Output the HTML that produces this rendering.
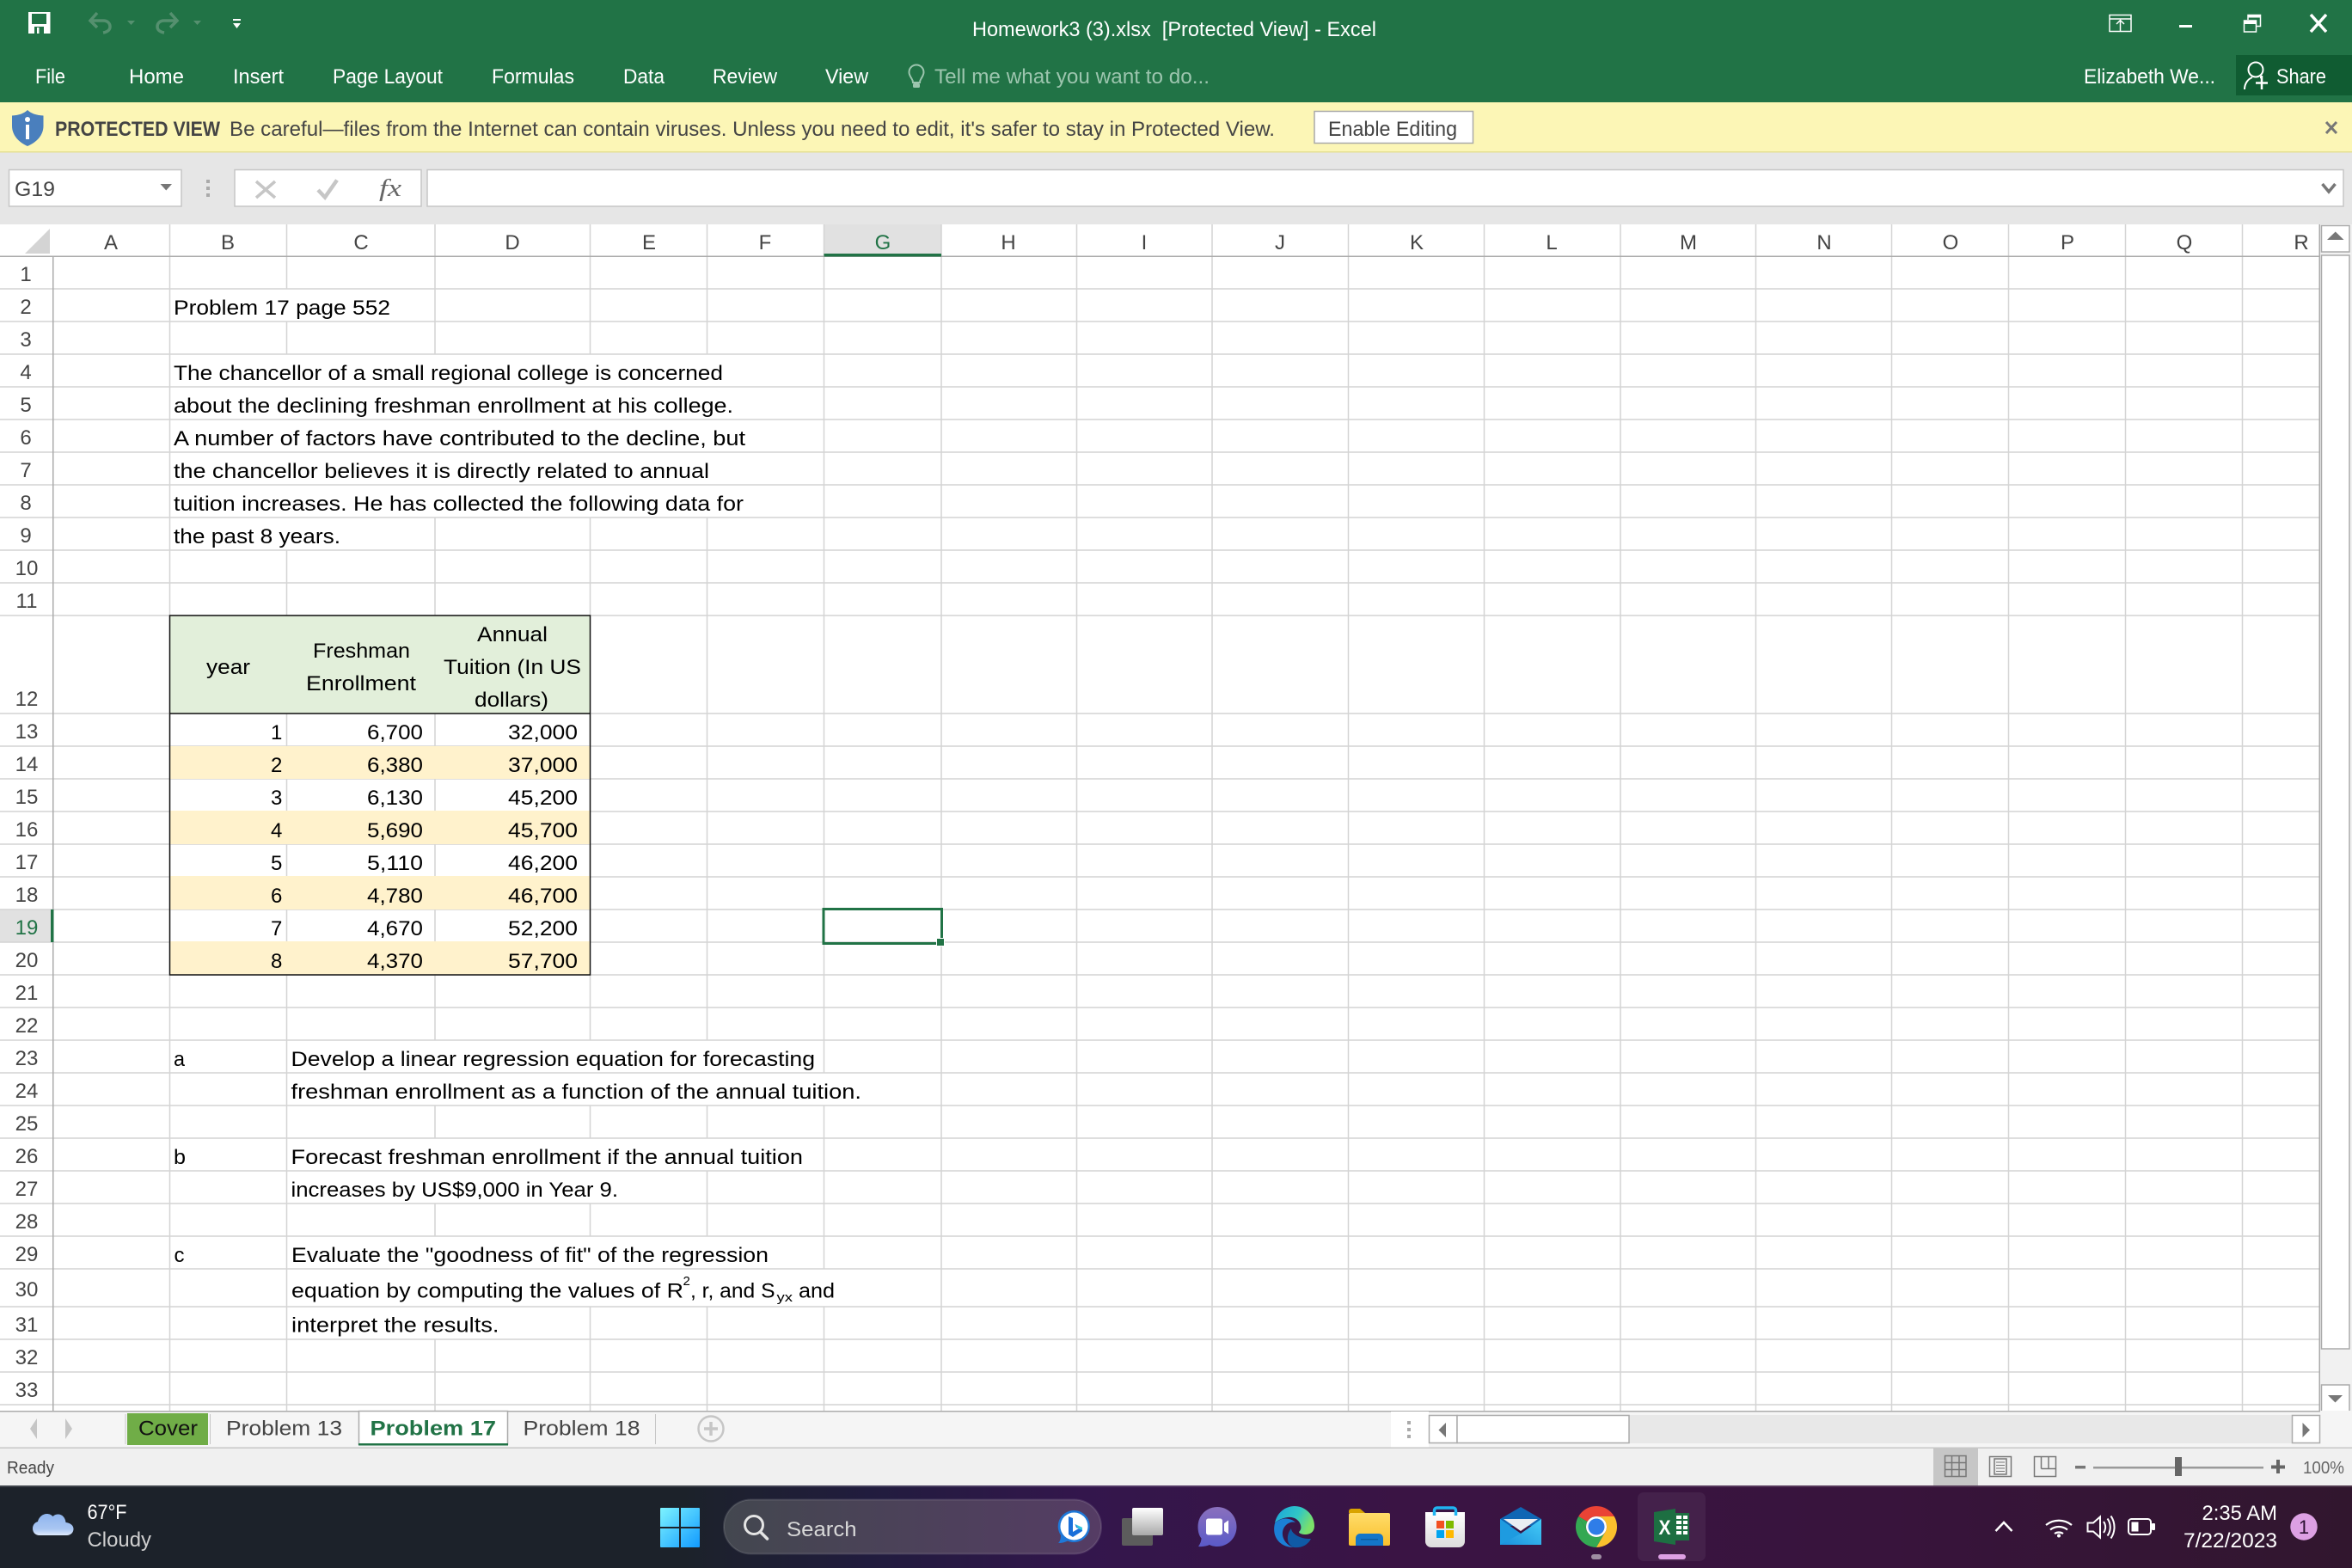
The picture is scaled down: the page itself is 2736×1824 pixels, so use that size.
<!DOCTYPE html>
<html lang="en">
<head>
<meta charset="utf-8">
<title>Homework3 (3).xlsx [Protected View] - Excel</title>
<style>
html,body{margin:0;padding:0;background:#fff;width:2736px;height:1824px;overflow:hidden}
svg{display:block;position:absolute;left:0;top:0}
text{font-family:"Liberation Sans",sans-serif;font-size:24px;fill:#000;white-space:pre}
.w text{fill:#fff}
.h text{fill:#444;text-anchor:middle}
.r text{fill:#444;text-anchor:middle}
.y text{fill:#444}
</style>
</head>
<body>
<svg xmlns="http://www.w3.org/2000/svg" width="2736" height="1824" viewBox="0 0 2736 1824">
<defs>
<linearGradient id="tb" x1="0" x2="1" y1="0" y2="0">
<stop offset="0" stop-color="#1c222a"/><stop offset=".29" stop-color="#1c222a"/><stop offset=".37" stop-color="#211c3e"/><stop offset=".46" stop-color="#33164c"/><stop offset=".6" stop-color="#3a1444"/><stop offset=".8" stop-color="#38143c"/><stop offset="1" stop-color="#31162e"/>
</linearGradient>
<linearGradient id="sr" x1="0" x2="1" y1="0" y2="0"><stop offset="0" stop-color="#43474f"/><stop offset="1" stop-color="#553c64"/></linearGradient>
<linearGradient id="win" x1="0" x2="1" y1="0" y2="1"><stop offset="0" stop-color="#7df3ff"/><stop offset="1" stop-color="#119aff"/></linearGradient>
<linearGradient id="cl" x1="0" x2="0" y1="0" y2="1"><stop offset="0" stop-color="#8fb5ee"/><stop offset=".7" stop-color="#a9c6f2"/><stop offset="1" stop-color="#dfeafc"/></linearGradient>
<linearGradient id="tm" x1="0" x2="0" y1="0" y2="1"><stop offset="0" stop-color="#8a70bd"/><stop offset="1" stop-color="#5a5ac8"/></linearGradient>
<linearGradient id="eg" x1="0" x2="1" y1="0" y2=".4"><stop offset="0" stop-color="#1aa3dc"/><stop offset=".6" stop-color="#30c6c6"/><stop offset="1" stop-color="#7be06a"/></linearGradient>
<linearGradient id="fd" x1="0" x2="0" y1="0" y2="1"><stop offset="0" stop-color="#ffdc6a"/><stop offset="1" stop-color="#f9c02c"/></linearGradient>
<linearGradient id="st" x1="0" x2="0" y1="0" y2="1"><stop offset="0" stop-color="#fff"/><stop offset="1" stop-color="#dcdcdc"/></linearGradient>
<linearGradient id="ml" x1="0" x2="1" y1="1" y2="0"><stop offset="0" stop-color="#1a8fdc"/><stop offset="1" stop-color="#45ccf7"/></linearGradient>
<linearGradient id="tv" x1="0" x2="0" y1="0" y2="1"><stop offset="0" stop-color="#fff"/><stop offset="1" stop-color="#a9a9a9"/></linearGradient>
</defs>

<!-- title + ribbon -->
<rect width="2736" height="119" fill="#217346"/>
<rect x="2601" y="64" width="135" height="47" fill="#105c32"/>

<!-- QAT icons -->
<path d="M33 14h25.500v25H33z" fill="#fff"/>
<rect x="37" y="16" width="17" height="12" fill="#217346"/>
<rect x="40" y="31" width="11" height="8" fill="#217346"/>
<rect x="43" y="32" width="2.500" height="7" fill="#fff"/>
<g fill="none" stroke="#55906f" stroke-width="3.500">
<path d="M106 24h14c6 0 8 4 8 7s-2 6-8 7"/>
<path d="M113 15l-8 9 8 8"/>
<path d="M205 24h-14c-6 0-8 4-8 7s2 6 8 7"/>
<path d="M198 15l8 9-8 8"/>
</g>
<path d="M148 24h9l-4.500 5zM225 24h9l-4.500 5z" fill="#55906f"/>
<rect x="271" y="22" width="9" height="2" fill="#fff"/>
<path d="M271 27h9l-4.500 6z" fill="#fff"/>

<g class="w">
<text x="1131" y="42" textLength="470" lengthAdjust="spacingAndGlyphs">Homework3 (3).xlsx  [Protected View] - Excel</text>
<text x="41" y="97" textLength="35" lengthAdjust="spacingAndGlyphs">File</text>
<text x="150" y="97" textLength="64" lengthAdjust="spacingAndGlyphs">Home</text>
<text x="271" y="97" textLength="59" lengthAdjust="spacingAndGlyphs">Insert</text>
<text x="387" y="97" textLength="128" lengthAdjust="spacingAndGlyphs">Page Layout</text>
<text x="572" y="97" textLength="96" lengthAdjust="spacingAndGlyphs">Formulas</text>
<text x="725" y="97" textLength="48" lengthAdjust="spacingAndGlyphs">Data</text>
<text x="829" y="97" textLength="75" lengthAdjust="spacingAndGlyphs">Review</text>
<text x="960" y="97" textLength="50" lengthAdjust="spacingAndGlyphs">View</text>
<text x="2424" y="97" textLength="153" lengthAdjust="spacingAndGlyphs">Elizabeth We...</text>
<text x="2648" y="97" textLength="58" lengthAdjust="spacingAndGlyphs">Share</text>
</g>
<text x="1087" y="97" textLength="320" lengthAdjust="spacingAndGlyphs" style="fill:#9cc5ae">Tell me what you want to do...</text>
<!-- bulb -->
<path d="M1066 75.500c-5 0-8.500 4-8.500 8.500 0 3 1.500 5 3 7.500 1 1.500 1.500 3 1.500 4.500h8c0-1.500.5-3 1.500-4.500 1.500-2.500 3-4.500 3-7.500 0-4.500-3.500-8.500-8.500-8.500z" fill="none" stroke="#9cc5ae" stroke-width="2"/>
<rect x="1062" y="97" width="8" height="5" rx="1.500" fill="#9cc5ae"/>

<!-- window buttons -->
<g fill="none" stroke="#fff" stroke-width="1.500">
<rect x="2454" y="17.500" width="25" height="19"/>
<path d="M2454 22h25M2466.500 36v-12M2462 28l4.500-4.500 4.500 4.500"/>
<rect x="2610.500" y="24" width="14" height="13"/>
<path d="M2615 23v-5.500h14.500v13h-4.500"/>
</g>
<rect x="2610" y="24" width="15" height="4" fill="#fff"/>
<rect x="2615" y="17" width="15" height="3.500" fill="#fff"/>
<rect x="2535" y="29" width="15" height="3" fill="#fff"/>
<path d="M2688 17l18 20M2706 17l-18 20" stroke="#fff" stroke-width="3.500" fill="none"/>
<!-- person -->
<circle cx="2624" cy="81" r="8.500" fill="none" stroke="#fff" stroke-width="2"/>
<path d="M2611 104c0-7 4-12 9-14" fill="none" stroke="#fff" stroke-width="2"/>
<path d="M2629 90h3M2631 88v16M2624 96.500h14" fill="none" stroke="#fff" stroke-width="2.500"/>

<!-- protected bar -->
<rect y="119" width="2736" height="58" fill="#fcf6b6"/>
<rect y="176" width="2736" height="1.500" fill="#e5e092"/>
<path d="M32 128c4 4 10 6 18.500 6.500v12c0 11-8 19-18.500 23.500C22 165.500 14 157.500 14 146.500v-12c8-.5 14-2.500 18-6.500z" fill="#4a7fbd"/>
<circle cx="32" cy="139" r="3" fill="#fff"/><rect x="30" y="145" width="4" height="17" fill="#fff"/>
<g class="y">
<text x="64" y="158" textLength="192" lengthAdjust="spacingAndGlyphs" style="font-weight:bold">PROTECTED VIEW</text>
<text x="267" y="158" textLength="1216" lengthAdjust="spacingAndGlyphs">Be careful—files from the Internet can contain viruses. Unless you need to edit, it's safer to stay in Protected View.</text>
</g>
<rect x="1529" y="129.500" width="184.500" height="37" fill="#fff" stroke="#a9a9a9" stroke-width="1.500"/>
<text x="1545" y="158" textLength="150" lengthAdjust="spacingAndGlyphs" style="fill:#444">Enable Editing</text>
<path d="M2706 142l12 13M2718 142l-12 13" stroke="#777" stroke-width="3" fill="none"/>

<!-- formula bar -->
<rect y="177.500" width="2736" height="84" fill="#e6e6e6"/>
<rect x="10.500" y="197.500" width="200.500" height="42.500" fill="#fff" stroke="#c6c6c6" stroke-width="1.500"/>
<text x="17" y="228" textLength="47" lengthAdjust="spacingAndGlyphs" style="fill:#444">G19</text>
<path d="M186.500 214h13.500l-6.750 7.500z" fill="#777"/>
<rect x="240" y="209" width="4" height="4" fill="#aaa"/><rect x="240" y="217" width="4" height="4" fill="#aaa"/><rect x="240" y="225" width="4" height="4" fill="#aaa"/>
<rect x="273" y="197.500" width="217" height="42.500" fill="#fff" stroke="#c6c6c6" stroke-width="1.500"/>
<path d="M298 211l22 19M320 211l-22 19" stroke="#c6c6c6" stroke-width="3.500" fill="none"/>
<path d="M370 221l8 8.500 14-20" stroke="#c6c6c6" stroke-width="4.500" fill="none"/>
<text x="441" y="228" textLength="26" lengthAdjust="spacingAndGlyphs" style="font-family:'Liberation Serif',serif;font-style:italic;font-size:28px;fill:#666">fx</text>
<rect x="497" y="197.500" width="2229" height="42.500" fill="#fff" stroke="#c6c6c6" stroke-width="1.500"/>
<path d="M2701.500 214l7.500 9 7.500-9" stroke="#777" stroke-width="3.500" fill="none"/>

<!-- grid area -->
<rect y="261" width="2699" height="1380" fill="#fff"/>
<rect x="958.500" y="261" width="136.500" height="37" fill="#e1e1e1"/>
<rect y="1058" width="61" height="38" fill="#e1e1e1"/>
<path d="M29 295h29v-29z" fill="#d4d4d4"/>

<!-- vertical grid lines -->
<path d="M197.500 261V1641M333.500 261V1641M506 261V1641M686.500 261V1641M822.500 261V1641M958.500 261V1641M1095 261V1641M1252.500 261V1641M1410 261V1641M1568.500 261V1641M1726.500 261V1641M1885 261V1641M2042.500 261V1641M2200.500 261V1641M2336.500 261V1641M2472.500 261V1641M2608.500 261V1641" stroke="#d4d4d4" stroke-width="1.500" fill="none"/>
<!-- overflow masks -->
<g fill="#fff">
<rect x="331.500" y="336" width="4" height="38"/>
<rect x="331.500" y="412" width="4" height="228"/>
<rect x="504" y="412" width="4" height="190"/>
<rect x="684.500" y="412" width="4" height="190"/>
<rect x="820.500" y="412" width="4" height="190"/>
<rect x="504" y="1210" width="4" height="76"/>
<rect x="684.500" y="1210" width="4" height="76"/>
<rect x="820.500" y="1210" width="4" height="76"/>
<rect x="956.500" y="1248" width="4" height="38"/>
<rect x="504" y="1324" width="4" height="76"/>
<rect x="684.500" y="1324" width="4" height="76"/>
<rect x="820.500" y="1324" width="4" height="38"/>
<rect x="504" y="1438" width="4" height="120"/>
<rect x="684.500" y="1438" width="4" height="82"/>
<rect x="820.500" y="1438" width="4" height="82"/>
<rect x="956.500" y="1476" width="4" height="44"/>
</g>
<!-- horizontal grid lines -->
<path d="M0 336H2698M0 374H2698M0 412H2698M0 450H2698M0 488H2698M0 526H2698M0 564H2698M0 602H2698M0 640H2698M0 678H2698M0 716H2698M0 830H2698M0 868H2698M0 906H2698M0 944H2698M0 982H2698M0 1020H2698M0 1058H2698M0 1096H2698M0 1134H2698M0 1172H2698M0 1210H2698M0 1248H2698M0 1286H2698M0 1324H2698M0 1362H2698M0 1400H2698M0 1438H2698M0 1476H2698M0 1520H2698M0 1558H2698M0 1596H2698M0 1634H2698" stroke="#d4d4d4" stroke-width="1.500" fill="none"/>
<rect x="61" y="298" width="1.500" height="1343" fill="#ababab"/>
<rect y="297.500" width="2699" height="1.500" fill="#ababab"/>
<rect x="958.500" y="295" width="136.500" height="3.500" fill="#217346"/>
<rect x="59" y="1058" width="3.500" height="38" fill="#217346"/>

<!-- column headers -->
<g class="h">
<text x="129" y="290">A</text><text x="265" y="290">B</text><text x="420" y="290">C</text><text x="596" y="290">D</text><text x="755" y="290">E</text><text x="890" y="290">F</text>
<text x="1027" y="290" style="fill:#217346">G</text>
<text x="1173" y="290">H</text><text x="1331" y="290">I</text><text x="1489" y="290">J</text><text x="1648" y="290">K</text><text x="1805" y="290">L</text><text x="1964" y="290">M</text><text x="2122" y="290">N</text><text x="2269" y="290">O</text><text x="2405" y="290">P</text><text x="2541" y="290">Q</text><text x="2677" y="290">R</text>
</g>
<!-- row headers -->
<g class="r" transform="translate(0,-1)">
<text x="30" y="328">1</text><text x="30" y="366">2</text><text x="30" y="404">3</text><text x="30" y="442">4</text><text x="30" y="480">5</text><text x="30" y="518">6</text><text x="30" y="556">7</text><text x="30" y="594">8</text><text x="30" y="632">9</text><text x="31" y="670">10</text><text x="31" y="708">11</text><text x="31" y="822">12</text><text x="31" y="860">13</text><text x="31" y="898">14</text><text x="31" y="936">15</text><text x="31" y="974">16</text><text x="31" y="1012">17</text><text x="31" y="1050">18</text>
<text x="31" y="1088" style="fill:#217346">19</text>
<text x="31" y="1126">20</text><text x="31" y="1164">21</text><text x="31" y="1202">22</text><text x="31" y="1240">23</text><text x="31" y="1278">24</text><text x="31" y="1316">25</text><text x="31" y="1354">26</text><text x="31" y="1392">27</text><text x="31" y="1430">28</text><text x="31" y="1468">29</text><text x="31" y="1509">30</text><text x="31" y="1550">31</text><text x="31" y="1588">32</text><text x="31" y="1626">33</text>
</g>

<!-- sheet text -->
<text x="202" y="366" textLength="252" lengthAdjust="spacingAndGlyphs">Problem 17 page 552</text>
<text x="202" y="442" textLength="639" lengthAdjust="spacingAndGlyphs">The chancellor of a small regional college is concerned</text>
<text x="202" y="480" textLength="651" lengthAdjust="spacingAndGlyphs">about the declining freshman enrollment at his college.</text>
<text x="202" y="518" textLength="665" lengthAdjust="spacingAndGlyphs">A number of factors have contributed to the decline, but</text>
<text x="202" y="556" textLength="623" lengthAdjust="spacingAndGlyphs">the chancellor believes it is directly related to annual</text>
<text x="202" y="594" textLength="663" lengthAdjust="spacingAndGlyphs">tuition increases. He has collected the following data for</text>
<text x="202" y="632" textLength="194" lengthAdjust="spacingAndGlyphs">the past 8 years.</text>

<!-- table -->
<rect x="197.500" y="716" width="489" height="114" fill="#e2efda"/>
<rect x="197.500" y="868" width="489" height="38" fill="#fff2cc"/>
<rect x="197.500" y="944" width="489" height="38" fill="#fff2cc"/>
<rect x="197.500" y="1020" width="489" height="38" fill="#fff2cc"/>
<rect x="197.500" y="1096" width="489" height="38" fill="#fff2cc"/>
<path d="M197.500 944H686.500M197.500 1020H686.500M197.500 1096H686.500" stroke="#fff2cc" stroke-width="2"/>
<rect x="197.500" y="716" width="489" height="418" fill="none" stroke="#111" stroke-width="1.500"/>
<path d="M197.500 830H686.500" stroke="#111" stroke-width="1.500"/>
<text x="240" y="784" textLength="51" lengthAdjust="spacingAndGlyphs">year</text>
<text x="364" y="765" textLength="113" lengthAdjust="spacingAndGlyphs">Freshman</text>
<text x="356" y="803" textLength="128" lengthAdjust="spacingAndGlyphs">Enrollment</text>
<text x="555" y="746" textLength="82" lengthAdjust="spacingAndGlyphs">Annual</text>
<text x="516" y="784" textLength="160" lengthAdjust="spacingAndGlyphs">Tuition (In US</text>
<text x="552" y="822" textLength="86" lengthAdjust="spacingAndGlyphs">dollars)</text>
<g>
<text x="315" y="860">1</text><text x="427" y="860" textLength="65" lengthAdjust="spacingAndGlyphs">6,700</text><text x="591" y="860" textLength="81" lengthAdjust="spacingAndGlyphs">32,000</text>
<text x="315" y="898">2</text><text x="427" y="898" textLength="65" lengthAdjust="spacingAndGlyphs">6,380</text><text x="591" y="898" textLength="81" lengthAdjust="spacingAndGlyphs">37,000</text>
<text x="315" y="936">3</text><text x="427" y="936" textLength="65" lengthAdjust="spacingAndGlyphs">6,130</text><text x="591" y="936" textLength="81" lengthAdjust="spacingAndGlyphs">45,200</text>
<text x="315" y="974">4</text><text x="427" y="974" textLength="65" lengthAdjust="spacingAndGlyphs">5,690</text><text x="591" y="974" textLength="81" lengthAdjust="spacingAndGlyphs">45,700</text>
<text x="315" y="1012">5</text><text x="427" y="1012" textLength="65" lengthAdjust="spacingAndGlyphs">5,110</text><text x="591" y="1012" textLength="81" lengthAdjust="spacingAndGlyphs">46,200</text>
<text x="315" y="1050">6</text><text x="427" y="1050" textLength="65" lengthAdjust="spacingAndGlyphs">4,780</text><text x="591" y="1050" textLength="81" lengthAdjust="spacingAndGlyphs">46,700</text>
<text x="315" y="1088">7</text><text x="427" y="1088" textLength="65" lengthAdjust="spacingAndGlyphs">4,670</text><text x="591" y="1088" textLength="81" lengthAdjust="spacingAndGlyphs">52,200</text>
<text x="315" y="1126">8</text><text x="427" y="1126" textLength="65" lengthAdjust="spacingAndGlyphs">4,370</text><text x="591" y="1126" textLength="81" lengthAdjust="spacingAndGlyphs">57,700</text>
</g>

<!-- selection -->
<rect x="958" y="1057.500" width="137.500" height="40" fill="none" stroke="#217346" stroke-width="3"/>
<rect x="1089" y="1091" width="10" height="10" fill="#fff"/>
<rect x="1090" y="1092" width="8" height="8" fill="#217346"/>

<!-- questions -->
<text x="202" y="1240" textLength="13" lengthAdjust="spacingAndGlyphs">a</text>
<text x="338.500" y="1240" textLength="609.500" lengthAdjust="spacingAndGlyphs">Develop a linear regression equation for forecasting</text>
<text x="338.500" y="1278" textLength="663.500" lengthAdjust="spacingAndGlyphs">freshman enrollment as a function of the annual tuition.</text>
<text x="202" y="1354" textLength="14" lengthAdjust="spacingAndGlyphs">b</text>
<text x="338.500" y="1354" textLength="595.500" lengthAdjust="spacingAndGlyphs">Forecast freshman enrollment if the annual tuition</text>
<text x="338.500" y="1392" textLength="380.500" lengthAdjust="spacingAndGlyphs">increases by US$9,000 in Year 9.</text>
<text x="202.500" y="1468" textLength="12" lengthAdjust="spacingAndGlyphs">c</text>
<text x="339" y="1468" textLength="555" lengthAdjust="spacingAndGlyphs">Evaluate the "goodness of fit" of the regression</text>
<text x="339" y="1509.500" textLength="456" lengthAdjust="spacingAndGlyphs">equation by computing the values of R</text>
<text x="794.500" y="1495" style="font-size:15px">2</text>
<text x="803" y="1509.500" textLength="98.500" lengthAdjust="spacingAndGlyphs">, r, and S</text>
<text x="903.500" y="1514" textLength="18.500" lengthAdjust="spacingAndGlyphs" style="font-size:15px">yx</text>
<text x="929" y="1509.500" textLength="42" lengthAdjust="spacingAndGlyphs">and</text>
<text x="339" y="1549.500" textLength="241.500" lengthAdjust="spacingAndGlyphs">interpret the results.</text>

<!-- vertical scrollbar -->
<rect x="2699" y="261" width="37" height="1423" fill="#f1f1f1"/>
<rect x="2700.500" y="262.500" width="32.500" height="30.500" fill="#fff" stroke="#ababab" stroke-width="1.500"/>
<path d="M2707 279h19.500l-9.750-9.500z" fill="#777"/>
<rect x="2700.500" y="297" width="32.500" height="1272" fill="#fff" stroke="#ababab" stroke-width="1.500"/>
<rect x="2700.500" y="1611" width="32.500" height="32" fill="#fff" stroke="#ababab" stroke-width="1.500"/>
<path d="M2708 1623h17l-8.500 8.500z" fill="#777"/>
<rect x="2697.500" y="261" width="1.500" height="1381" fill="#ababab"/>

<!-- tab strip -->
<rect y="1641" width="2736" height="43" fill="#f5f5f5"/>
<rect y="1641" width="2699" height="1.500" fill="#ababab"/>
<path d="M43 1650v24l-8-12zM76 1650v24l8-12z" fill="#c6c6c6"/>
<rect x="148" y="1644" width="94" height="37" fill="#70ad47"/>
<rect x="145.500" y="1645" width="1" height="35" fill="#c6c6c6"/>
<rect x="244" y="1645" width="1" height="35" fill="#c6c6c6"/>
<rect x="417" y="1641" width="174" height="40" fill="#fff"/>
<path d="M417.500 1681V1641.500H590.500V1681" fill="none" stroke="#ababab" stroke-width="1.500"/>
<rect x="417" y="1679" width="174" height="2.500" fill="#217346"/>
<rect x="762" y="1645" width="1" height="35" fill="#c6c6c6"/>
<text x="161" y="1669.500" textLength="69" lengthAdjust="spacingAndGlyphs" style="fill:#111">Cover</text>
<text x="263" y="1669.500" textLength="135" lengthAdjust="spacingAndGlyphs" style="fill:#444">Problem 13</text>
<text x="430.500" y="1669.500" textLength="146.500" lengthAdjust="spacingAndGlyphs" style="fill:#217346;font-weight:bold">Problem 17</text>
<text x="608.500" y="1669.500" textLength="136" lengthAdjust="spacingAndGlyphs" style="fill:#444">Problem 18</text>
<circle cx="827" cy="1662" r="14.500" fill="none" stroke="#c6c6c6" stroke-width="2.500"/>
<path d="M819 1662h16M827 1654v16" stroke="#c6c6c6" stroke-width="3.500"/>

<!-- horizontal scrollbar -->
<rect x="1618" y="1642" width="44" height="42" fill="#fff"/>
<rect x="1637" y="1653" width="4" height="4" fill="#aaa"/><rect x="1637" y="1661" width="4" height="4" fill="#aaa"/><rect x="1637" y="1669" width="4" height="4" fill="#aaa"/>
<rect x="1662" y="1646" width="1004" height="33" fill="#e8e8e8"/>
<rect x="1662.500" y="1646.500" width="32.500" height="32" fill="#fff" stroke="#ababab" stroke-width="1.500"/>
<path d="M1682 1655v17l-8.500-8.500z" fill="#777"/>
<rect x="1695" y="1646.500" width="200" height="32" fill="#fff" stroke="#ababab" stroke-width="1.500"/>
<rect x="2666.500" y="1646.500" width="32" height="32" fill="#fff" stroke="#ababab" stroke-width="1.500"/>
<path d="M2678.500 1655v17l8.500-8.500z" fill="#777"/>

<!-- status bar -->
<rect y="1684" width="2736" height="44" fill="#f0f0f0"/>
<rect y="1683.500" width="2736" height="1.500" fill="#c6c6c6"/>
<text x="8" y="1714" textLength="55" lengthAdjust="spacingAndGlyphs" style="font-size:20px;fill:#444">Ready</text>
<rect x="2249" y="1685" width="52" height="43" fill="#c6c6c6"/>
<g fill="none" stroke="#777" stroke-width="1.500">
<path d="M2262.500 1693.500h24.500v24h-24.500zM2270.500 1693.500v24M2279 1693.500v24M2262.500 1701.500h24.500M2262.500 1709.500h24.500"/>
<rect x="2314.500" y="1694.500" width="25" height="23"/>
<rect x="2320" y="1697" width="14" height="18"/>
<path d="M2322 1701h10M2322 1704.500h10M2322 1708h10M2322 1711.500h10" stroke-width="1"/>
<rect x="2366.500" y="1694.500" width="25" height="23"/>
<path d="M2374.500 1694.500v14M2383 1694.500v14M2374.500 1708.500h17"/>
</g>
<rect x="2414" y="1705" width="12" height="3.500" fill="#777"/>
<rect x="2435" y="1706" width="198" height="2.500" fill="#9a9a9a"/>
<rect x="2530" y="1695" width="8" height="22" fill="#666"/>
<path d="M2642 1706.500h16M2650 1698v16" stroke="#666" stroke-width="4"/>
<text x="2679" y="1714" textLength="48" lengthAdjust="spacingAndGlyphs" style="font-size:20px;fill:#666">100%</text>

<!-- taskbar -->
<rect y="1728" width="2736" height="96" fill="url(#tb)"/>
<rect y="1728" width="2736" height="2" fill="#fff" opacity=".14"/>
<!-- weather -->
<path d="M46 1786c-5 0-8-3.500-8-8 0-4 2.500-7 6-8 1-5 5.500-9 10.500-9 3 0 5 1 7 3 2-2 4-2.500 6-2.500 5 0 8.500 4 9 9.500 4.500.5 9 3 9 7.500 0 4-3 7.500-8 7.500z" fill="url(#cl)"/>
<g class="w"><text x="101.500" y="1767" textLength="46" lengthAdjust="spacingAndGlyphs">67°F</text></g>
<text x="101.500" y="1799" textLength="74.500" lengthAdjust="spacingAndGlyphs" style="fill:#cfcfcf">Cloudy</text>
<!-- start -->
<g fill="url(#win)">
<path d="M768 1755a1 1 0 0 1 1-1h21v22h-22zM792 1754h21a1 1 0 0 1 1 1v21h-22zM768 1778h22v22h-21a1 1 0 0 1-1-1zM792 1778h22v21a1 1 0 0 1-1 1h-21z"/>
</g>
<!-- search -->
<rect x="842" y="1744.500" width="439" height="63" rx="31.500" fill="url(#sr)" stroke="#ffffff" stroke-opacity=".12" stroke-width="2"/>
<circle cx="877" cy="1774" r="10.500" fill="none" stroke="#e4e4e4" stroke-width="3"/>
<path d="M884.500 1782l8 8" stroke="#e4e4e4" stroke-width="3.500" stroke-linecap="round"/>
<text x="915" y="1787" textLength="81.500" lengthAdjust="spacingAndGlyphs" style="fill:#d8d8d8">Search</text>
<!-- bing -->
<path d="M1249 1757a18.500 18.500 0 1 1-7 35.500c-3 1.500-7 2.500-11 2.500 2-2 3-5 3-9a18.500 18.500 0 0 1 15-29z" fill="#1e78d8"/>
<circle cx="1249.500" cy="1775.500" r="16" fill="#fff"/>
<path d="M1243 1764l5 2v16l7-4-3-1-1.500-4 8.500 4v4l-11 7-5-3z" fill="#1a6fd9"/>
<path d="M1250.500 1773l8.500 4v3l-4-1.500z" fill="#30c8dc"/>
<!-- task view -->
<rect x="1305" y="1766" width="36" height="32" rx="2" fill="#5c5c5c"/>
<rect x="1317" y="1754" width="36" height="32" rx="2" fill="url(#tv)"/>
<!-- teams -->
<path d="M1416 1753c12.500 0 22.500 10 22.500 23s-10 23-22.500 23c-3.500 0-7-.8-9-2-3.500 1.500-8 2.500-13 2 2-3 3.500-6 3.500-9.500-3-3.500-4-8.500-4-13.500 0-13 10-23 22.500-23z" fill="url(#tm)"/>
<rect x="1403" y="1766.500" width="19" height="19" rx="2.500" fill="#fff"/>
<path d="M1424 1772l5-3.500v16l-5-3.500z" fill="#fff"/>
<!-- edge -->
<g transform="translate(1481,1752)">
<path d="M2 20C4 8 14 0 25 0C38 0 48 11 48 23C48 30 43 33 38 33C34 33 30 32 30 30C32 28 33 26 32 22C30 15 23 12 17 13C9 14 3 18 2 20Z" fill="url(#eg)"/>
<path d="M2 20C-2 36 8 48 24 48C16 46 10 38 11 30C12 22 20 17 26 19C22 15 14 13 8 16C5 17 3 19 2 20Z" fill="#1b7fd6"/>
<path d="M24 48C32 49 40 46 44 38C40 38 36 38 31 36C24 33 21 29 21 26C16 32 14 44 24 48Z" fill="#0f5aa6"/>
</g>
<!-- folder -->
<path d="M1569 1758a3 3 0 0 1 3-3h10l6 5h-19z" fill="#d9a300"/>
<rect x="1569" y="1760" width="48" height="38" rx="2" fill="url(#fd)"/>
<path d="M1577 1798v-9a5 5 0 0 1 5-5h22a5 5 0 0 1 5 5v9z" fill="#1476c9"/>
<rect x="1583" y="1790" width="20" height="1.500" fill="#0d5da2"/>
<!-- store -->
<path d="M1658 1759h46v34a7 7 0 0 1-7 7h-32a7 7 0 0 1-7-7z" fill="url(#st)"/>
<path d="M1668.500 1763v-6a3 3 0 0 1 3-3h19a3 3 0 0 1 3 3v6" fill="none" stroke="#1fb4f0" stroke-width="3.500"/>
<rect x="1671" y="1769" width="9" height="9" fill="#f25022"/>
<rect x="1682" y="1769" width="9" height="9" fill="#7fba00"/>
<rect x="1671" y="1780" width="9" height="9" fill="#00a4ef"/>
<rect x="1682" y="1780" width="9" height="9" fill="#ffb900"/>
<!-- mail -->
<path d="M1745 1767l24-14 24 14v8h-48z" fill="#0f66b4"/>
<path d="M1749 1767h40l-20 14z" fill="#e9edf2"/>
<path d="M1745 1767l24 17 24-17v30h-48z" fill="url(#ml)"/>
<path d="M1745 1797v-30l24 17z" fill="#1e9be0"/>
<!-- chrome -->
<g transform="translate(1833,1752)">
<path d="M24 0A24 24 0 0 1 44.800 12L24 12A12 12 0 0 0 13.600 18L3.200 12A24 24 0 0 1 24 0Z" fill="#ea4335"/>
<path d="M3.200 12A24 24 0 0 0 24 48L34.400 30A12 12 0 0 1 13.600 30Z" fill="#34a853"/>
<path d="M3.200 12L13.600 30A12 12 0 0 1 13.600 18Z" fill="#34a853"/>
<path d="M44.800 12A24 24 0 0 1 24 48L34.400 30A12 12 0 0 0 24 12Z" fill="#fbc02d"/>
<circle cx="24" cy="24" r="12" fill="#fff"/>
<circle cx="24" cy="24" r="9.500" fill="#2f7de8"/>
</g>
<rect x="1851" y="1808" width="12" height="6" rx="3" fill="#9e8ea2"/>
<!-- excel -->
<rect x="1905" y="1736" width="79" height="80" rx="7" fill="#fff" fill-opacity=".06"/>
<rect x="1946" y="1760" width="19" height="32" fill="#1d6f42"/>
<g fill="#fff"><rect x="1950" y="1763" width="6" height="4"/><rect x="1958" y="1763" width="5" height="4"/><rect x="1950" y="1769" width="6" height="4"/><rect x="1958" y="1769" width="5" height="4"/><rect x="1950" y="1775" width="6" height="4"/><rect x="1958" y="1775" width="5" height="4"/><rect x="1950" y="1781" width="6" height="4"/><rect x="1958" y="1781" width="5" height="4"/></g>
<path d="M1924 1759l25-4v42l-25-4z" fill="#1d6f42"/>
<text x="1929.500" y="1785" textLength="14" lengthAdjust="spacingAndGlyphs" style="fill:#fff;font-weight:bold;font-size:24px">X</text>
<rect x="1929" y="1808" width="32" height="6" rx="3" fill="#dda0e3"/>
<!-- tray -->
<path d="M2321.500 1781l9.500-10 9.500 10" fill="none" stroke="#fff" stroke-width="2.500"/>
<g fill="none" stroke="#fff" stroke-width="2.200">
<path d="M2380 1774a24 24 0 0 1 30 0M2385 1779.500a16 16 0 0 1 20 0M2390 1784a9 9 0 0 1 10 0"/>
</g>
<circle cx="2395" cy="1786.500" r="2" fill="#fff"/>
<g fill="none" stroke="#fff" stroke-width="2">
<path d="M2428.500 1771.500h6.500l8-7v24l-8-7h-6.500z"/>
<path d="M2447 1770a11 11 0 0 1 0 13M2451.500 1766.500a17 17 0 0 1 0 20M2455.500 1763.500a23 23 0 0 1 0 26"/>
</g>
<rect x="2476" y="1767" width="26" height="18" rx="3.500" fill="none" stroke="#fff" stroke-width="2"/>
<rect x="2479.500" y="1770.500" width="8" height="11" fill="#fff"/>
<rect x="2503" y="1772" width="4" height="8" rx="1" fill="#fff"/>
<g class="w">
<text x="2561.500" y="1768" textLength="87.500" lengthAdjust="spacingAndGlyphs">2:35 AM</text>
<text x="2540" y="1800" textLength="109" lengthAdjust="spacingAndGlyphs">7/22/2023</text>
</g>
<circle cx="2680" cy="1776" r="15.700" fill="#dda0e3"/>
<text x="2680" y="1784" text-anchor="middle" style="fill:#2b1030;font-size:22px;text-anchor:middle">1</text>
</svg>
</body>
</html>
